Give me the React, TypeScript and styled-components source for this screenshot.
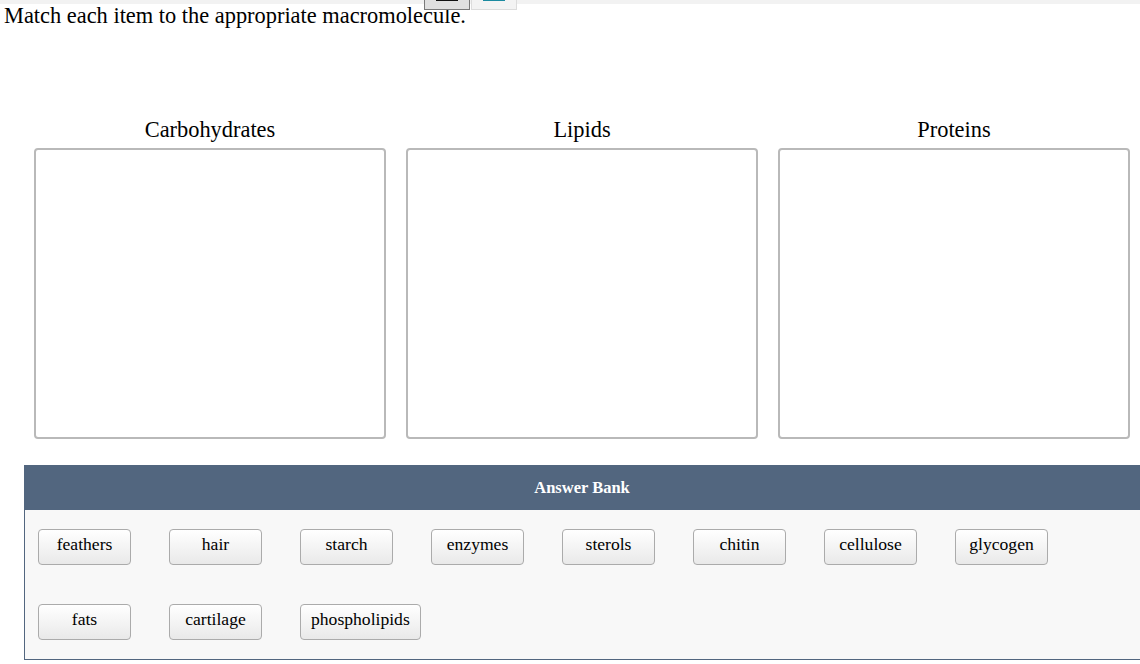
import React from 'react'
import styled, { createGlobalStyle } from 'styled-components'

const GlobalStyle = createGlobalStyle`
  html, body {
    margin: 0;
    padding: 0;
    background: #ffffff;
  }
  body {
    overflow: hidden;
  }
`

const serif = `"Liberation Serif", "Times New Roman", Times, serif`

const Page = styled.div`
  position: relative;
  width: 1140px;
  height: 664px;
  overflow: hidden;
  font-family: ${serif};
  color: #000000;
`

const TopStrip = styled.div`
  height: 4px;
  background: #f2f2f2;
`

const Toolbar = styled.div`
  position: absolute;
  top: -22px;
  left: 424px;
  display: flex;
  gap: 1px;
`

const ToolButton = styled.div<{ $active?: boolean; $bar: string }>`
  width: 46px;
  height: 32px;
  box-sizing: border-box;
  background: ${({ $active }) => ($active ? '#e0e0e0' : '#f3f3f3')};
  border: 1px solid ${({ $active }) => ($active ? '#7a7a7a' : '#dcdcdc')};
  display: flex;
  justify-content: center;
  align-items: flex-end;
  padding-bottom: 8px;
  &::after {
    content: '';
    display: block;
    width: 22px;
    height: 2px;
    background: ${({ $bar }) => $bar};
  }
`

const Prompt = styled.p`
  margin: 0;
  padding: 0 0 0 4px;
  font-family: ${serif};
  font-size: 22.4px;
  line-height: 24px;
`

const Columns = styled.div`
  display: grid;
  grid-template-columns: repeat(3, 352px);
  column-gap: 20px;
  padding: 91px 0 0 34px;
`

const Column = styled.div`
  display: flex;
  flex-direction: column;
`

const ColumnTitle = styled.h2`
  margin: 0;
  font-family: ${serif};
  font-size: 22.4px;
  font-weight: normal;
  line-height: 22px;
  text-align: center;
  height: 29px;
`

const DropZone = styled.div`
  height: 291px;
  box-sizing: border-box;
  border: 2px solid #b9b9b9;
  border-radius: 4px;
  background: #ffffff;
`

const Bank = styled.section`
  margin: 26px 0 0 24px;
  width: 1130px;
  border: 1px solid #52667f;
  border-top: none;
  box-sizing: border-box;
`

const BankHeader = styled.div`
  height: 45px;
  background: #52667f;
  color: #ffffff;
  font-family: ${serif};
  font-size: 16.5px;
  font-weight: bold;
  display: flex;
  align-items: center;
  justify-content: center;
  padding-right: 14px;
`

const BankBody = styled.div`
  background: #f8f8f8;
  padding: 19px 14px 19px 13px;
`

const ChipList = styled.div`
  display: flex;
  flex-wrap: wrap;
  column-gap: 38px;
  row-gap: 39px;
  width: 1050px;
`

const Chip = styled.div`
  min-width: 93px;
  height: 36px;
  box-sizing: border-box;
  padding: 4px 10px 0;
  border: 1px solid #ababab;
  border-radius: 4px;
  background: linear-gradient(#ffffff, #e9e9e9);
  font-family: ${serif};
  font-size: 17.6px;
  line-height: 20px;
  text-align: center;
`

const columns = ['Carbohydrates', 'Lipids', 'Proteins']

const items = [
  'feathers',
  'hair',
  'starch',
  'enzymes',
  'sterols',
  'chitin',
  'cellulose',
  'glycogen',
  'fats',
  'cartilage',
  'phospholipids',
]

export default function App() {
  return (
    <Page>
      <GlobalStyle />
      <TopStrip />
      <Prompt>Match each item to the appropriate macromolecule.</Prompt>
      <Toolbar>
        <ToolButton $active $bar="#111111" />
        <ToolButton $bar="#1b8aa0" />
      </Toolbar>

      <Columns>
        {columns.map((name) => (
          <Column key={name}>
            <ColumnTitle>{name}</ColumnTitle>
            <DropZone />
          </Column>
        ))}
      </Columns>

      <Bank>
        <BankHeader>Answer Bank</BankHeader>
        <BankBody>
          <ChipList>
            {items.map((item) => (
              <Chip key={item}>{item}</Chip>
            ))}
          </ChipList>
        </BankBody>
      </Bank>
    </Page>
  )
}
